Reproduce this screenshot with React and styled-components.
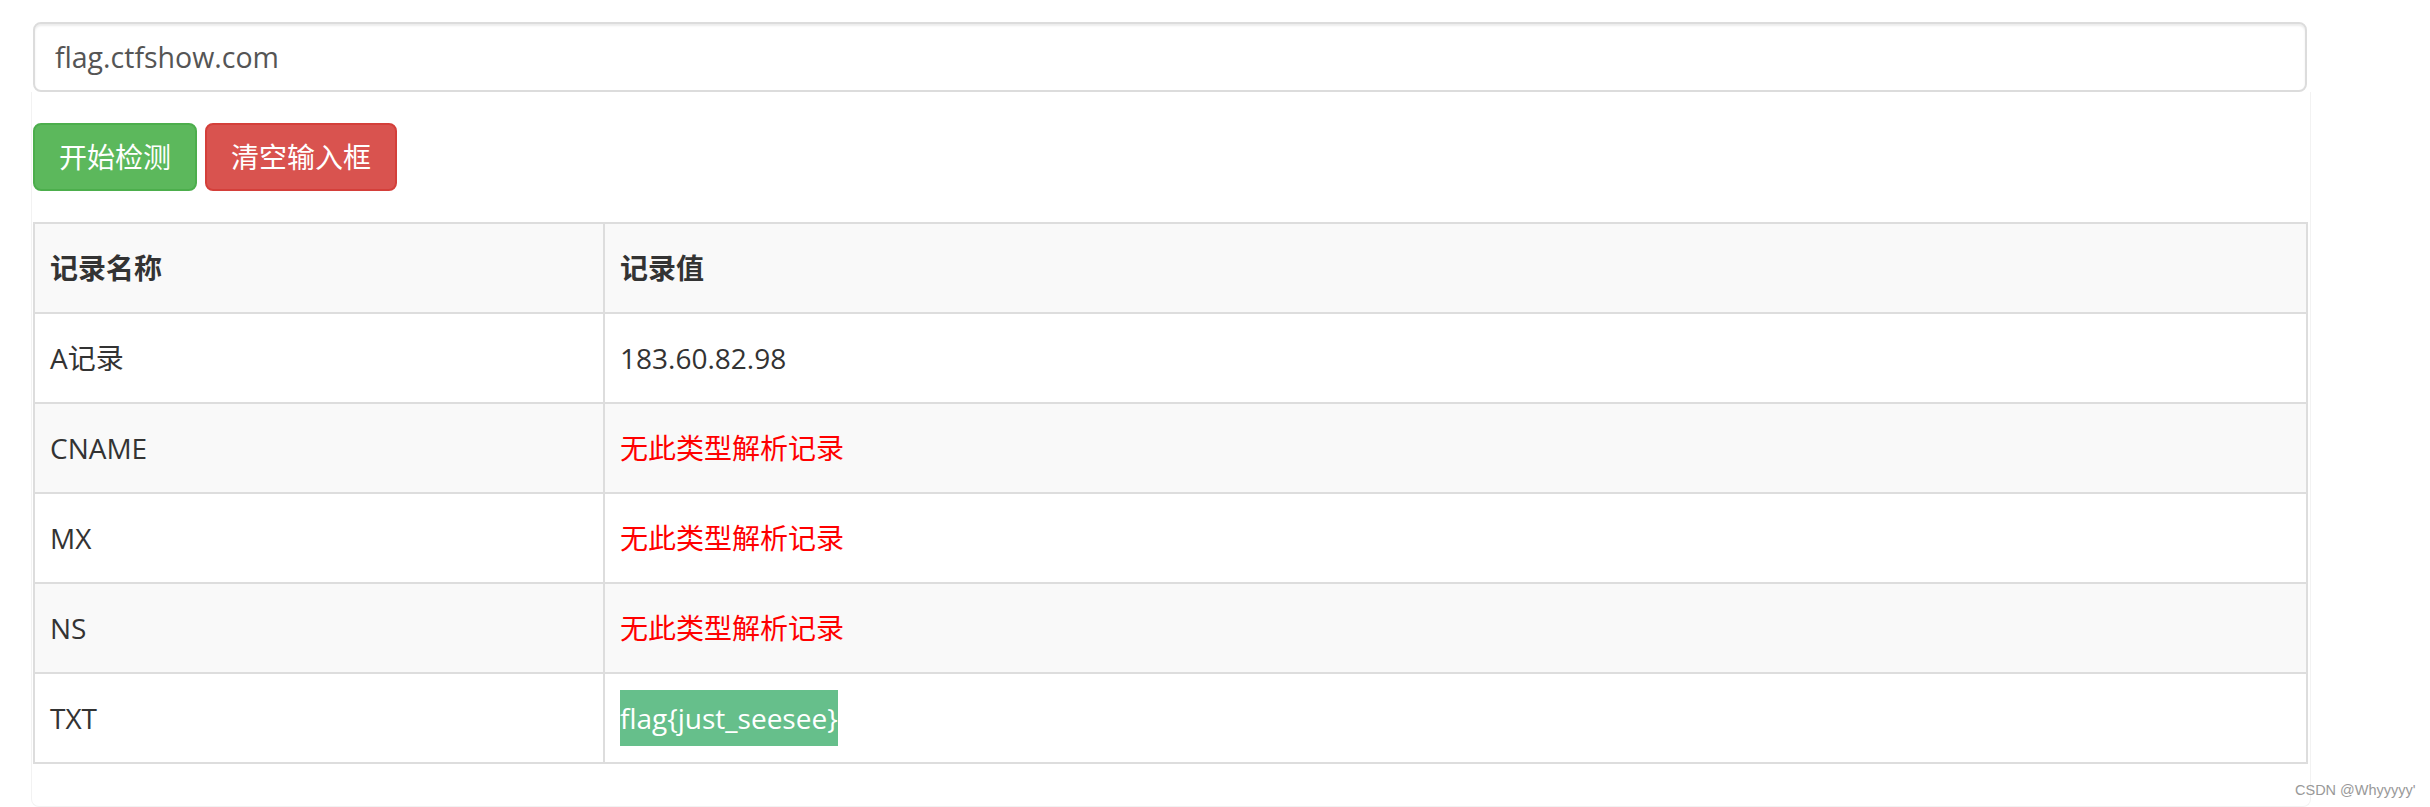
import React from 'react'
import styled, { createGlobalStyle } from 'styled-components'

const GlobalStyle = createGlobalStyle`
  html, body {
    margin: 0;
    padding: 0;
    background: #fff;
  }
  body {
    font-family: "Open Sans", "Noto Sans CJK SC", sans-serif;
    color: #333;
  }
`

const Page = styled.div`
  position: relative;
  width: 2430px;
  height: 807px;
  overflow: hidden;
  padding: 22px 0 0 31px;
  box-sizing: border-box;
`

const Input = styled.input`
  display: block;
  box-sizing: border-box;
  width: 2274px;
  height: 70px;
  margin-left: 2px;
  padding: 0 20px;
  border: 2px solid #dcdcdc;
  border-radius: 8px;
  box-shadow: inset 0 2px 2px rgba(0, 0, 0, 0.075);
  font-family: "Open Sans", "Noto Sans CJK SC", sans-serif;
  font-size: 28.5px;
  color: #555;
  outline: none;
`

const Panel = styled.div`
  box-sizing: border-box;
  width: 2280px;
  padding: 31px 1px 42px 1px;
  border: 1px solid #f2f2f2;
  border-top: none;
  border-radius: 0 0 8px 8px;
`

const Toolbar = styled.div`
  display: flex;
  gap: 8px;
  margin-bottom: 31px;
`

const Button = styled.button`
  box-sizing: border-box;
  height: 68px;
  padding: 0 24px;
  border: 2px solid ${p => (p.$variant === 'danger' ? '#d43f3a' : '#4cae4c')};
  background: ${p => (p.$variant === 'danger' ? '#d9534f' : '#5cb85c')};
  border-radius: 8px;
  color: #fff;
  font-family: "Open Sans", "Noto Sans CJK SC", sans-serif;
  font-size: 28px;
  line-height: 64px;
  cursor: pointer;
`

const Table = styled.table`
  width: 2275px;
  border-collapse: collapse;
  table-layout: fixed;
  border: 2px solid #ddd;
`

const NameCol = styled.col`
  width: 570px;
`

const Row = styled.tr`
  background: ${p => (p.$striped ? '#f9f9f9' : '#fff')};
`

const Cell = styled.td`
  border: 2px solid #ddd;
  padding: 16px 15px;
  height: 56px;
  font-size: 28px;
  line-height: 56px;
  font-weight: ${p => (p.$head ? 700 : 400)};
  color: ${p => (p.$missing ? '#ff0000' : '#333')};
  white-space: nowrap;
`

const Flag = styled.span`
  display: inline-block;
  height: 56px;
  line-height: 56px;
  background: #66bf8b;
  color: #fff;
`

const Watermark = styled.div`
  position: absolute;
  left: 2295px;
  top: 781px;
  font-family: "Liberation Sans", Arial, sans-serif;
  font-size: 14.5px;
  line-height: 18px;
  color: #999;
  white-space: nowrap;
`

const MISSING = '无此类型解析记录'

const records = [
  { name: 'A记录', value: '183.60.82.98' },
  { name: 'CNAME', value: MISSING, missing: true },
  { name: 'MX', value: MISSING, missing: true },
  { name: 'NS', value: MISSING, missing: true },
  { name: 'TXT', value: 'flag{just_seesee}', flag: true },
]

const App = () => {
  return (
    <Page>
      <GlobalStyle />
      <Input defaultValue="flag.ctfshow.com" />
      <Panel>
        <Toolbar>
          <Button>开始检测</Button>
          <Button $variant="danger">清空输入框</Button>
        </Toolbar>
        <Table>
          <colgroup>
            <NameCol />
            <col />
          </colgroup>
          <tbody>
            <Row $striped>
              <Cell $head>记录名称</Cell>
              <Cell $head>记录值</Cell>
            </Row>
            {records.map((r, i) => (
              <Row key={r.name} $striped={i % 2 === 1}>
                <Cell>{r.name}</Cell>
                <Cell $missing={r.missing}>
                  {r.flag ? <Flag>{r.value}</Flag> : r.value}
                </Cell>
              </Row>
            ))}
          </tbody>
        </Table>
      </Panel>
      <Watermark>CSDN @Whyyyyy'</Watermark>
    </Page>
  )
}

export default App
